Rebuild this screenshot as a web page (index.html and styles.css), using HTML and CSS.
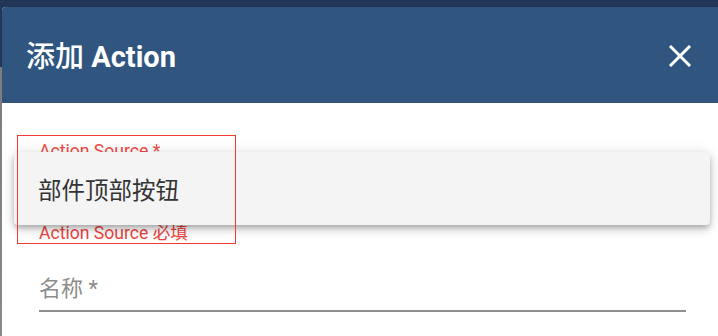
FILE: index.html
```html
<!DOCTYPE html>
<html lang="zh">
<head>
<meta charset="utf-8">
<link rel="stylesheet" href="styles.css">
</head>
<body>
<div class="dialog">
  <header class="dialog-header">
    <h1 class="dialog-title"><span class="cjk">添加</span> Action</h1>
    <button class="close-btn" aria-label="关闭">
      <svg width="22" height="22" viewBox="0 0 22 22"><path d="M2 2L20 20M20 2L2 20" stroke="#fff" stroke-width="3" stroke-linecap="square"/></svg>
    </button>
  </header>
  <div class="dialog-body">
    <div class="field-select">
      <div class="field-content">
        <div class="field-label">Action Source *</div>
        <div class="field-helper">Action Source 必填</div>
      </div>
      <div class="field-outline"></div>
    </div>
    <div class="menu">
      <div class="menu-item">部件顶部按钮</div>
    </div>
    <div class="field-text">
      <div class="input-line">名称 *</div>
    </div>
  </div>
</div>
</body>
</html>
```

FILE: styles.css
```css
html, body {
  margin: 0;
  padding: 0;
  height: 100%;
  overflow: hidden;
}
body {
  background: linear-gradient(to bottom, #223758 0, #223758 67px, #7c7c7c 67px, #8a8a8a 100%);
  font-family: Roboto, "Noto Sans CJK SC", sans-serif;
}
.dialog {
  margin: 7px 0 0 2px;
  height: calc(100% - 7px);
  background: #fff;
  border-top-left-radius: 4px;
  overflow: hidden;
}
.dialog-header {
  height: 96px;
  background: #30567f;
  display: flex;
  align-items: center;
  justify-content: space-between;
  padding: 0 27px 0 24px;
  box-sizing: border-box;
}
.dialog-title {
  margin: 0;
  color: #fff;
  font-size: 29px;
  font-weight: 700;
  line-height: 34px;
  padding-top: 1px;
}
.dialog-title .cjk {
  font-weight: 500;
  font-family: "Noto Sans CJK SC", sans-serif;
}
.close-btn {
  border: 0;
  background: transparent;
  padding: 0;
  width: 22px;
  height: 22px;
  display: flex;
  margin-top: 1px;
}
.dialog-body {
  position: relative;
  padding: 32px 32px 0 37px;
}
.field-select {
  margin-left: -22px;
  width: 219px;
  height: 109px;
  display: grid;
  grid-template: 1fr / 1fr;
}
.field-content {
  grid-area: 1 / 1;
  box-sizing: border-box;
  padding: 7px 0 1px 22px;
  display: flex;
  flex-direction: column;
  justify-content: space-between;
}
.field-outline {
  grid-area: 1 / 1;
  position: relative;
  z-index: 3;
  border: 1px solid #f23a34;
  pointer-events: none;
}
.field-label {
  color: #ef4a44;
  font-size: 17.6px;
  line-height: 19px;
  white-space: nowrap;
}
.field-helper {
  color: #ec4540;
  font-size: 17.6px;
  line-height: 19px;
  white-space: nowrap;
}
.menu {
  position: absolute;
  left: 12px;
  top: 49px;
  width: 696px;
  height: 73px;
  background: #f4f4f4;
  border-radius: 4px;
  box-shadow: 0 3px 5px -1px rgba(0,0,0,.2), 0 5px 8px 0 rgba(0,0,0,.14), 0 1px 14px 0 rgba(0,0,0,.12);
  display: flex;
  align-items: center;
  padding-left: 24px;
  box-sizing: border-box;
  z-index: 2;
}
.menu-item {
  font-family: "Noto Sans CJK SC", sans-serif;
  font-size: 23.5px;
  color: #333;
  line-height: 30px;
}
.field-text {
  margin-top: 28px;
}
.input-line {
  font-size: 22px;
  line-height: 33px;
  color: #8c8c8c;
  padding-bottom: 5px;
  border-bottom: 2px solid #8f8f8f;
  width: 647px;
}
```
